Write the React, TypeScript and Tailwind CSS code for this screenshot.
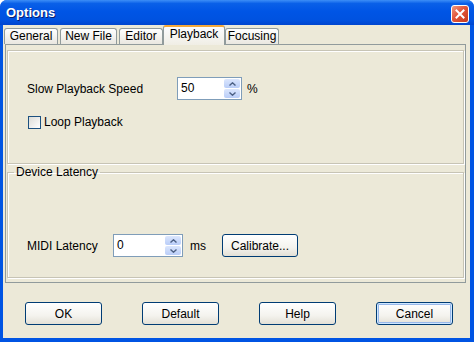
import React from "react";

const font = "font-['Liberation_Sans',Arial,sans-serif]";

function Spin() {
  return (
    <div className="flex flex-col w-[17px] h-full py-[1px] pr-[1px] gap-[1px]">
      <div className="flex-1 flex items-center justify-center rounded-[2px] bg-[linear-gradient(180deg,#dbe6fd,#b9cdf8)]">
        <svg width="7" height="4" viewBox="0 0 7 4">
          <polyline points="0.5,3.5 3.5,0.8 6.5,3.5" fill="none" stroke="#4d6185" strokeWidth="1.4" />
        </svg>
      </div>
      <div className="flex-1 flex items-center justify-center rounded-[2px] bg-[linear-gradient(180deg,#dbe6fd,#b9cdf8)]">
        <svg width="7" height="4" viewBox="0 0 7 4">
          <polyline points="0.5,0.5 3.5,3.2 6.5,0.5" fill="none" stroke="#4d6185" strokeWidth="1.4" />
        </svg>
      </div>
    </div>
  );
}

function SpinBox({ value, width }: { value: string; width: string }) {
  return (
    <div className={`flex items-stretch h-[23px] ${width} bg-white border border-[#7f9db9]`}>
      <span className="flex-1 pl-[3px] pt-[2px] leading-[16px]">{value}</span>
      <Spin />
    </div>
  );
}

function Button({ label, isDefault = false, className = "" }: { label: string; isDefault?: boolean; className?: string }) {
  return (
    <button
      className={`h-[23px] rounded-[3px] border border-[#003c74] bg-[linear-gradient(180deg,#ffffff_0%,#f4f3ee_60%,#e3e0d6_100%)] text-[12px] text-black ${
        isDefault ? "shadow-[inset_0_0_0_1px_#cee7ff,inset_0_0_0_2px_#98b8ea]" : ""
      } ${className}`}
    >
      {label}
    </button>
  );
}

export default function App() {
  const tabs = [
    { name: "General", w: "w-[54px]", ml: "ml-[1px]" },
    { name: "New File", w: "w-[57px]", ml: "ml-[2px]" },
    { name: "Editor", w: "w-[44px]", ml: "ml-[2px]" },
    { name: "Playback", w: "w-[62px]", ml: "ml-0", active: true },
    { name: "Focusing", w: "w-[54px]", ml: "ml-0" },
  ];

  return (
    <div className={`${font} w-[474px] h-[342px] bg-white text-[12px] text-black`}>
      <div className="w-full h-full flex flex-col rounded-t-[7px] bg-[#0054e3] overflow-hidden">
        {/* Title bar */}
        <div className="h-[25px] shrink-0 flex items-center justify-between pl-[6px] pr-[5px] bg-[linear-gradient(180deg,#3d8ef7_0%,#0a60e8_14%,#0055e5_45%,#0052e0_80%,#0045cf_100%)]">
          <span className="text-white font-bold text-[13px] leading-none [text-shadow:1px_1px_0_#0a1e6e]">Options</span>
          <div className="w-[18px] h-[18px] mt-[2px] rounded-[3px] border border-white bg-[linear-gradient(135deg,#f09a80_0%,#e2553a_45%,#c63a1c_100%)] flex items-center justify-center">
            <svg width="10" height="10" viewBox="0 0 10 10">
              <path d="M1.5 1.5 L8.5 8.5 M8.5 1.5 L1.5 8.5" stroke="white" strokeWidth="2" strokeLinecap="square" />
            </svg>
          </div>
        </div>

        {/* Body */}
        <div className="flex-1 flex flex-col ml-[3px] mr-[4px] mb-[4px] bg-[#ece9d8]">
          {/* Tabs */}
          <div className="h-[19px] flex items-end">
            {tabs.map((t) =>
              t.active ? (
                <div
                  key={t.name}
                  className={`${t.w} ${t.ml} relative z-10 h-[20px] -mb-[1px] rounded-t-[3px] border-x border-[#919b9c] border-t-2 border-t-[#f4a83a] bg-[linear-gradient(180deg,#fcfcfe,#f0eee5)] text-center leading-[15px]`}
                >
                  {t.name}
                </div>
              ) : (
                <div
                  key={t.name}
                  className={`${t.w} ${t.ml} h-[16px] rounded-t-[3px] border-x border-t border-[#919b9c] bg-[linear-gradient(180deg,#ffffff,#e9e7e0)] text-center leading-[15px]`}
                >
                  {t.name}
                </div>
              )
            )}
          </div>

          {/* Panel */}
          <div className="ml-[2px] w-[461px] h-[239px] border border-[#919b9c] bg-[#ece9d8] flex flex-col px-[1px]">
            <div className="mt-[5px] h-[114px] border border-[#c7c4b5] shadow-[inset_1px_1px_0_#fff,1px_1px_0_#fff] pl-[19px] pt-[26px]">
              <div className="flex items-center h-[23px]">
                <span className="w-[150px]">Slow Playback Speed</span>
                <SpinBox value="50" width="w-[65px]" />
                <span className="ml-[5px]">%</span>
              </div>
              <div className="flex items-center mt-[15px] h-[14px]">
                <span className="ml-[1px] w-[13px] h-[13px] border border-[#1c5180] bg-[linear-gradient(135deg,#dcdcd7,#ffffff)]" />
                <span className="ml-[3px]">Loop Playback</span>
              </div>
            </div>

            <fieldset className="mt-[1px] h-[113px] border border-[#c7c4b5] shadow-[inset_1px_1px_0_#fff,1px_1px_0_#fff]">
              <legend className="ml-[6px] px-[2px] leading-[14px]">Device Latency</legend>
              <div className="flex items-center h-[23px] mt-[55px] pl-[19px]">
                <span className="w-[86px]">MIDI Latency</span>
                <SpinBox value="0" width="w-[70px]" />
                <span className="ml-[7px] w-[32px]">ms</span>
                <Button label="Calibrate..." className="w-[76px] h-[22px]" />
              </div>
            </fieldset>
          </div>

          {/* Dialog buttons */}
          <div className="flex items-center gap-[40px] pl-[22px] mt-[19px]">
            <Button label="OK" className="w-[77px]" />
            <Button label="Default" className="w-[77px]" />
            <Button label="Help" className="w-[77px]" />
            <Button label="Cancel" isDefault className="w-[77px]" />
          </div>
        </div>
      </div>
    </div>
  );
}
